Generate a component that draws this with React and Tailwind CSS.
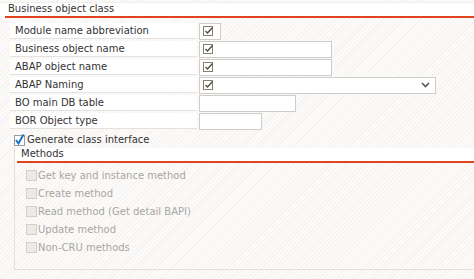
import React from "react";

function CheckIcon() {
  return (
    <svg width="11" height="10" viewBox="0 0 11 10" className="shrink-0">
      <rect x="0.5" y="0.5" width="9" height="9" fill="#fff" stroke="#8a7d6a" strokeWidth="1" />
      <path d="M2.5 5 L4.5 7 L9.5 1.5" fill="none" stroke="#4a4a4a" strokeWidth="1.3" />
    </svg>
  );
}

function Row({ label, width, dropdown, checked }) {
  return (
    <div className="flex items-center h-[18px]">
      <div className="w-[187px] h-[16px] bg-white border-b border-[#e4e2df] pl-[5px] flex items-center">
        {label}
      </div>
      <div
        className="ml-[2px] h-[17px] bg-white border border-[#cfcdca] flex items-center pl-[3px]"
        style={{ width }}
      >
        {checked && <CheckIcon />}
        {dropdown && (
          <svg width="9" height="6" viewBox="0 0 9 6" className="ml-auto mr-[5px]">
            <path d="M1 1 L4.5 4.5 L8 1" fill="none" stroke="#555" strokeWidth="1.6" />
          </svg>
        )}
      </div>
    </div>
  );
}

function DisabledBox() {
  return <div className="w-[11px] h-[11px] border border-[#d2d0cd] bg-[#eceae7] shrink-0" />;
}

export default function App() {
  const rows = [
    { label: "Module name abbreviation", width: 22, checked: true },
    { label: "Business object name", width: 133, checked: true },
    { label: "ABAP object name", width: 133, checked: true },
    { label: "ABAP Naming", width: 237, checked: true, dropdown: true },
    { label: "BO main DB table", width: 97 },
    { label: "BOR Object type", width: 63 },
  ];
  const methods = [
    "Get key and instance method",
    "Create method",
    "Read method (Get detail BAPI)",
    "Update method",
    "Non-CRU methods",
  ];

  return (
    <div
      className="w-[474px] h-[279px] overflow-hidden text-[10px] text-[#333] bg-[repeating-linear-gradient(135deg,#fcfbfa_0px,#fcfbfa_2px,#f5f3f1_2px,#f5f3f1_3px)]"
      style={{ fontFamily: '"DejaVu Sans", Tahoma, sans-serif' }}
    >
      <div className="bg-white border-t border-[#eeeeee] mt-[2px]">
        <div className="ml-[5px] h-[15px] border-b-2 border-[#e0441f] pl-[3px] leading-[12px]">
          Business object class
        </div>
      </div>

      <div className="pl-[10px] pt-[4px] flex flex-col">
        {rows.map((r) => (
          <Row key={r.label} {...r} />
        ))}
      </div>

      <div className="flex items-center gap-[2px] pl-[14px] mt-[1px] h-[17px]">
        <svg width="11" height="12" viewBox="0 0 11 12">
          <rect x="0.5" y="1.5" width="10" height="10" fill="#fff" stroke="#9a9a9a" />
          <path d="M2 6 L4.5 9.5 L9.5 0.5" fill="none" stroke="#1a73c8" strokeWidth="2" />
        </svg>
        <span>Generate class interface</span>
      </div>

      <div className="ml-[14px] border-l border-b border-[#e2e0dd] h-[122px]">
        <div className="bg-white">
          <div className="ml-[2px] h-[15px] border-b-2 border-[#e0441f] pl-[4px] leading-[12px]">
            Methods
          </div>
        </div>
        <div className="pl-[11px] pt-[3px] flex flex-col text-[#a8a6a3]">
          {methods.map((m) => (
            <div key={m} className="flex items-center gap-[1px] h-[18px]">
              <DisabledBox />
              <span>{m}</span>
            </div>
          ))}
        </div>
      </div>
    </div>
  );
}
